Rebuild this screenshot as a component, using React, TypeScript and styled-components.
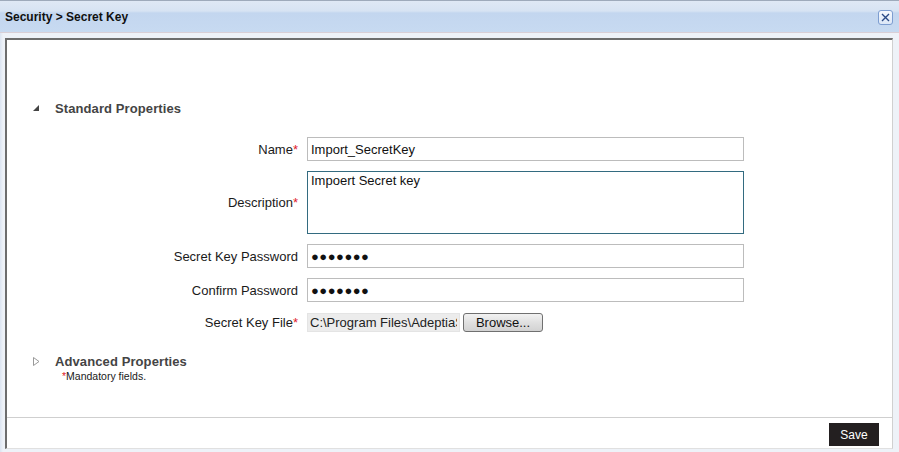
import React from "react";
import styled, { createGlobalStyle } from "styled-components";

const Global = createGlobalStyle`
  html, body { margin: 0; padding: 0; background: #ffffff; }
  body { font-family: "Liberation Sans", Arial, sans-serif; }
  * { box-sizing: border-box; }
`;

const Window = styled.div`
  width: 899px;
  height: 452px;
  display: flex;
  flex-direction: column;
  background: #e9eef6;
  border-top: 1px solid #9eaabb;
  overflow: hidden;
`;

const TitleBar = styled.div`
  height: 32px;
  flex: none;
  display: flex;
  align-items: center;
  justify-content: space-between;
  padding: 0 6px 0 5px;
  background: linear-gradient(
    to bottom,
    #dfe8f5 0px,
    #d7e3f3 10px,
    #c3d6ef 12px,
    #c7daf1 31px
  );
  border-bottom: 1px solid #d9cfd6;
`;

const Title = styled.span`
  font-family: "Liberation Sans", Arial, sans-serif;
  font-weight: bold;
  font-size: 12px;
  color: #101010;
`;

const CloseBtn = styled.div`
  width: 15px;
  height: 15px;
  border: 1px solid #7d9dd0;
  border-radius: 3px;
  background: linear-gradient(#f6f9fe, #dce7f7);
  display: flex;
  align-items: center;
  justify-content: center;
  margin-top: 1px;
`;

const Frame = styled.div`
  flex: 1;
  display: flex;
  padding: 5px 6px 3px 5px;
  background: linear-gradient(to right, #dbe4f1 0px, #eef2f8 3px);
`;

const Panel = styled.div`
  flex: 1;
  display: flex;
  flex-direction: column;
  background: #ffffff;
  border-top: 2px solid #6d6d6d;
  border-left: 2px solid #6d6d6d;
  border-right: 1px solid #d0d0d0;
  border-bottom: 1px solid #e0e0e0;
`;

const Content = styled.div`
  flex: 1;
  display: flex;
  flex-direction: column;
  padding-top: 59px;
`;

const SectionHead = styled.div`
  display: flex;
  align-items: center;
  padding-left: 26px;
  height: 18px;
`;

const Arrow = styled.span`
  width: 22px;
  display: inline-flex;
  align-items: center;
`;

const SectionTitle = styled.span`
  font-weight: bold;
  font-size: 13px;
  letter-spacing: 0.1px;
  color: #444444;
`;

const Form = styled.div`
  display: grid;
  grid-template-columns: 291px 437px;
  column-gap: 9px;
  row-gap: 10px;
  margin-top: 20px;
  align-items: center;
`;

const Label = styled.label`
  text-align: right;
  font-size: 13px;
  color: #1a1a1a;
`;

const Req = styled.span`
  color: #e0202a;
`;

const TextInput = styled.div<{ $focused?: boolean; $tall?: boolean }>`
  height: ${(p) => (p.$tall ? "63px" : "24px")};
  border: 1px solid ${(p) => (p.$focused ? "#336b80" : "#bcbcbc")};
  padding: ${(p) => (p.$tall ? "1px 3px" : "0 3px")};
  display: flex;
  align-items: ${(p) => (p.$tall ? "flex-start" : "center")};
  font-size: 13px;
  color: #111111;
  background: #ffffff;
`;

const Dots = styled.span`
  font-size: 13px;
  letter-spacing: 0.5px;
  font-weight: bold;
`;

const FileRow = styled.div`
  display: flex;
  align-items: center;
  gap: 3px;
  margin-top: 1px;
`;

const FileBox = styled.input`
  width: 153px;
  height: 19px;
  background: #ececec;
  border: 1px solid #e4e4e4;
  padding: 0 2px;
  margin: 0;
  font-family: "Liberation Sans", Arial, sans-serif;
  font-size: 13px;
  color: #222;
  outline: none;
`;

const BrowseBtn = styled.div`
  width: 80px;
  height: 19px;
  border: 1px solid #707070;
  border-radius: 3px;
  background: linear-gradient(#f2f2f2, #e0e0e0 50%, #d2d2d2);
  font-size: 13px;
  color: #111;
  display: flex;
  align-items: center;
  justify-content: center;
`;

const AdvHead = styled(SectionHead)`
  margin-top: 20px;
`;

const Mandatory = styled.div`
  font-size: 10.5px;
  color: #1a1a1a;
  padding-left: 55px;
`;

const Footer = styled.div`
  height: 31px;
  flex: none;
  border-top: 1px solid #cfcfcf;
  display: flex;
  justify-content: flex-end;
  align-items: flex-start;
  padding: 5px 13px 0 0;
`;

const SaveBtn = styled.div`
  width: 50px;
  height: 23px;
  background: #231f20;
  color: #ffffff;
  font-family: "Liberation Sans", Arial, sans-serif;
  font-size: 12px;
  display: flex;
  align-items: center;
  justify-content: center;
`;

export default function App() {
  return (
    <>
      <Global />
      <Window>
        <TitleBar>
          <Title>Security &gt; Secret Key</Title>
          <CloseBtn>
            <svg width="9" height="9" viewBox="0 0 9 9">
              <path d="M1 1L8 8M8 1L1 8" stroke="#2a4a86" strokeWidth="1.4" />
            </svg>
          </CloseBtn>
        </TitleBar>
        <Frame>
          <Panel>
            <Content>
              <SectionHead>
                <Arrow>
                  <svg width="6" height="6" viewBox="0 0 6 6">
                    <path d="M6 0L6 6L0 6Z" fill="#444" />
                  </svg>
                </Arrow>
                <SectionTitle>Standard Properties</SectionTitle>
              </SectionHead>
              <Form>
                <Label>
                  Name<Req>*</Req>
                </Label>
                <TextInput>Import_SecretKey</TextInput>
                <Label>
                  Description<Req>*</Req>
                </Label>
                <TextInput $focused $tall>
                  Impoert Secret key
                </TextInput>
                <Label>Secret Key Password</Label>
                <TextInput>
                  <Dots>●●●●●●●</Dots>
                </TextInput>
                <Label>Confirm Password</Label>
                <TextInput>
                  <Dots>●●●●●●●</Dots>
                </TextInput>
                <Label>
                  Secret Key File<Req>*</Req>
                </Label>
                <FileRow>
                  <FileBox readOnly value="C:\Program Files\AdeptiaSuite" />
                  <BrowseBtn>Browse...</BrowseBtn>
                </FileRow>
              </Form>
              <AdvHead>
                <Arrow>
                  <svg width="7" height="9" viewBox="0 0 7 9">
                    <path d="M0.5 0.5L6 4.5L0.5 8.5Z" fill="none" stroke="#999" />
                  </svg>
                </Arrow>
                <SectionTitle>Advanced Properties</SectionTitle>
              </AdvHead>
              <Mandatory>
                <Req>*</Req>Mandatory fields.
              </Mandatory>
            </Content>
            <Footer>
              <SaveBtn>Save</SaveBtn>
            </Footer>
          </Panel>
        </Frame>
      </Window>
    </>
  );
}
